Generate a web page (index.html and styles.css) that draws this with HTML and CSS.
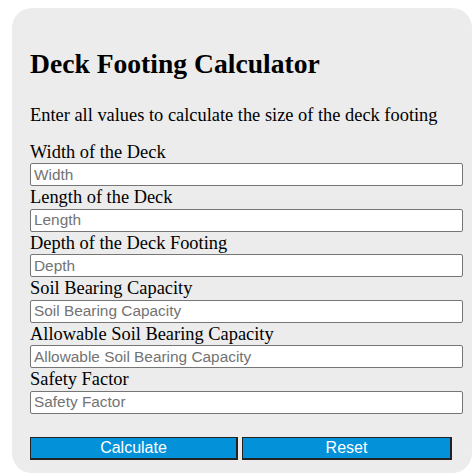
FILE: index.html
```html
<!DOCTYPE html>
<html lang="en">
<head>
    <meta charset="UTF-8">
    <meta name="viewport" content="width=device-width, initial-scale=1.0">
    <title>Deck Footing Calculator</title>
    <link rel="stylesheet" href="styles.css">
</head>
<body>
    <div class="calculator">
        <h1>Deck Footing Calculator</h1>
        <p class="intro">Enter all values to calculate the size of the deck footing</p>

        <!-- Champs de saisie -->
        <div class="field">
            <label for="width">Width of the Deck</label>
            <input type="number" id="width" placeholder="Width">
        </div>
        <div class="field">
            <label for="length">Length of the Deck</label>
            <input type="number" id="length" placeholder="Length">
        </div>
        <div class="field">
            <label for="depth">Depth of the Deck Footing</label>
            <input type="number" id="depth" placeholder="Depth">
        </div>
        <div class="field">
            <label for="soil">Soil Bearing Capacity</label>
            <input type="number" id="soil" placeholder="Soil Bearing Capacity">
        </div>
        <div class="field">
            <label for="allowable">Allowable Soil Bearing Capacity</label>
            <input type="number" id="allowable" placeholder="Allowable Soil Bearing Capacity">
        </div>
        <div class="field">
            <label for="safety">Safety Factor</label>
            <input type="number" id="safety" placeholder="Safety Factor">
        </div>

        <div class="buttons">
            <button type="button">Calculate</button>
            <button type="button">Reset</button>
        </div>
    </div>
</body>
</html>
```

FILE: styles.css
```css
body {
    margin: 0;
    padding: 8px 0 0 12px;
    background-color: #fff;
    font-family: "Liberation Serif", "Times New Roman", serif;
    color: #000;
}
.calculator {
    width: 424px;
    padding: 18px 18px 13px 18px;
    background-color: #ececec;
    border-radius: 20px;
}
h1 {
    font-size: 27.6px;
    line-height: 32px;
    font-weight: bold;
    margin: 22px 0 25px 0;
}
.intro {
    font-size: 18.4px;
    line-height: 21px;
    margin: 0 0 14.5px 0;
}
.field label {
    display: block;
    font-size: 18.4px;
    line-height: 22.5px;
}
.field input {
    display: block;
    width: 100%;
    height: 21px;
    margin: 0;
    padding: 0 4px 0 3px;
    border: 1px solid #767676;
    border-radius: 2px;
    background: #fff;
    font-family: "Liberation Sans", Arial, sans-serif;
    font-size: 15.4px;
    box-sizing: content-box;
}
.field input::placeholder {
    color: #737373;
}
.buttons {
    display: flex;
    gap: 4px;
    margin-top: 23px;
}
.buttons button {
    width: 208px;
    height: 23px;
    padding: 0;
    background-color: #0391d9;
    color: #fff;
    font-family: "Liberation Sans", Arial, sans-serif;
    font-size: 16px;
    border: 1px solid #222;
    border-right-width: 2px;
    border-bottom-width: 2px;
}
.buttons button + button {
    width: 210px;
}
```
